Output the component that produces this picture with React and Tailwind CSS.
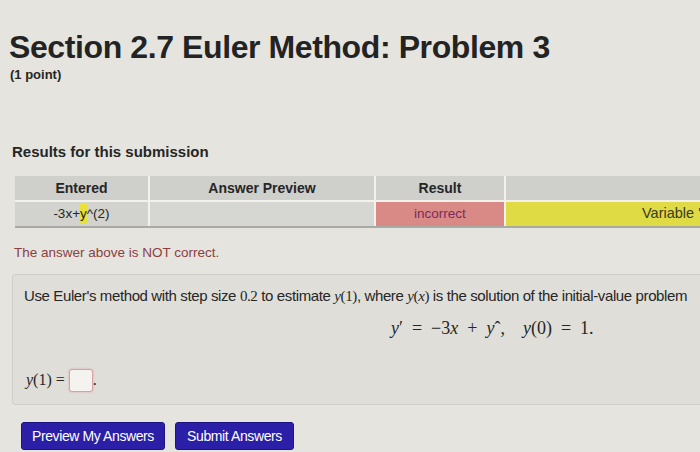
import React from "react";

const M = ({ children }) => (
  <span className="italic" style={{ fontFamily: '"Liberation Serif", "DejaVu Serif", serif' }}>
    {children}
  </span>
);
const R = ({ children }) => (
  <span style={{ fontFamily: '"Liberation Serif", "DejaVu Serif", serif' }}>{children}</span>
);

export default function App() {
  return (
    <div
      className="w-[700px] h-[452px] overflow-hidden bg-[#e5e4df] text-[#262626]"
      style={{ fontFamily: '"Liberation Sans", Arial, sans-serif' }}
    >
      {/* Title */}
      <div className="pt-[28px] pl-[9px]">
        <h1 className="text-[32px] font-bold leading-[38px] tracking-[-0.4px] text-[#232323]">
          Section 2.7 Euler Method: Problem 3
        </h1>
        <div className="text-[13px] font-semibold leading-[16px] mt-[1px] pl-[1px]">(1 point)</div>
      </div>

      {/* Results */}
      <div className="mt-[60px] pl-[12px] text-[15px] font-bold leading-[18px]">
        Results for this submission
      </div>

      <div className="mt-[15px] ml-[15px] w-[900px] border-b-2 border-[#a9a9a5] bg-[#f2f1ec]">
        <div className="flex gap-[2px] text-[14px]">
          <div className="w-[133px] h-[24px] bg-[#cfcfcc] flex items-center justify-center font-bold">Entered</div>
          <div className="w-[224px] h-[24px] bg-[#cfcfcc] flex items-center justify-center font-bold">Answer Preview</div>
          <div className="w-[128px] h-[24px] bg-[#cfcfcc] flex items-center justify-center font-bold">Result</div>
          <div className="flex-1 h-[24px] bg-[#cfcfcc]"></div>
        </div>
        <div className="flex gap-[2px] mt-[2px] text-[13.5px]">
          <div className="w-[133px] h-[24px] bg-[#d2d2cf] flex items-center justify-center">
            -3x+<span className="bg-[#e8e13a]">y</span>^(2)
          </div>
          <div className="w-[224px] h-[24px] bg-[#d6d6d2]"></div>
          <div className="w-[128px] h-[24px] bg-[#d98a86] flex items-center justify-center text-[#7a2b5c]">
            incorrect
          </div>
          <div className="flex-1 h-[24px] bg-[#dfdb45] flex items-center pl-[136px] text-[14.5px] text-[#3a3a20]">
            Variable '
          </div>
        </div>
      </div>

      <div className="mt-[17px] pl-[14px] text-[13.5px] leading-[16px] text-[#8c4040]">
        The answer above is NOT correct.
      </div>

      {/* Problem */}
      <div className="mt-[13px] ml-[12px] w-[720px] h-[131px] bg-[#dfded9] border border-[#cfcec9] rounded-[3px] pl-[11px] pt-[11px]">
        <div className="text-[15px] leading-[20px] tracking-[-0.38px] whitespace-nowrap">
          Use Euler's method with step size <R>0.2</R> to estimate <M>y</M>
          <R>(1)</R>, where <M>y</M>
          <R>(</R>
          <M>x</M>
          <R>)</R> is the solution of the initial-value problem
        </div>
        <div className="mt-[12px] pl-[367px] text-[18px] leading-[20px] whitespace-nowrap">
          <M>y</M>
          <R>′ &nbsp;= &nbsp;−3</R>
          <M>x</M>
          <R> &nbsp;+ &nbsp;</R>
          <M>y</M>
          <R>ˆ,&nbsp;&nbsp;&nbsp;&nbsp;</R>
          <M>y</M>
          <R>(0) &nbsp;= &nbsp;1.</R>
        </div>
        <div className="mt-[30px] pl-[2px] flex items-center text-[16px]">
          <M>y</M>
          <R>(1) =&nbsp;</R>
          <span className="inline-block w-[24px] h-[23px] border border-[#d6a2a2] bg-[#f4f3ef] rounded-[3px] shadow-[0_0_2px_#e0a0a0]"></span>
          <R>.</R>
        </div>
      </div>

      {/* Buttons */}
      <div className="mt-[17px] ml-[21px] flex gap-[10px]">
        <button className="w-[144px] h-[28px] bg-[#2a1fa6] rounded-[3px] text-white text-[14px] tracking-[-0.4px] border border-[#1c1480]">
          Preview My Answers
        </button>
        <button className="w-[119px] h-[28px] bg-[#2a1fa6] rounded-[3px] text-white text-[14px] tracking-[-0.4px] border border-[#1c1480]">
          Submit Answers
        </button>
      </div>
    </div>
  );
}
